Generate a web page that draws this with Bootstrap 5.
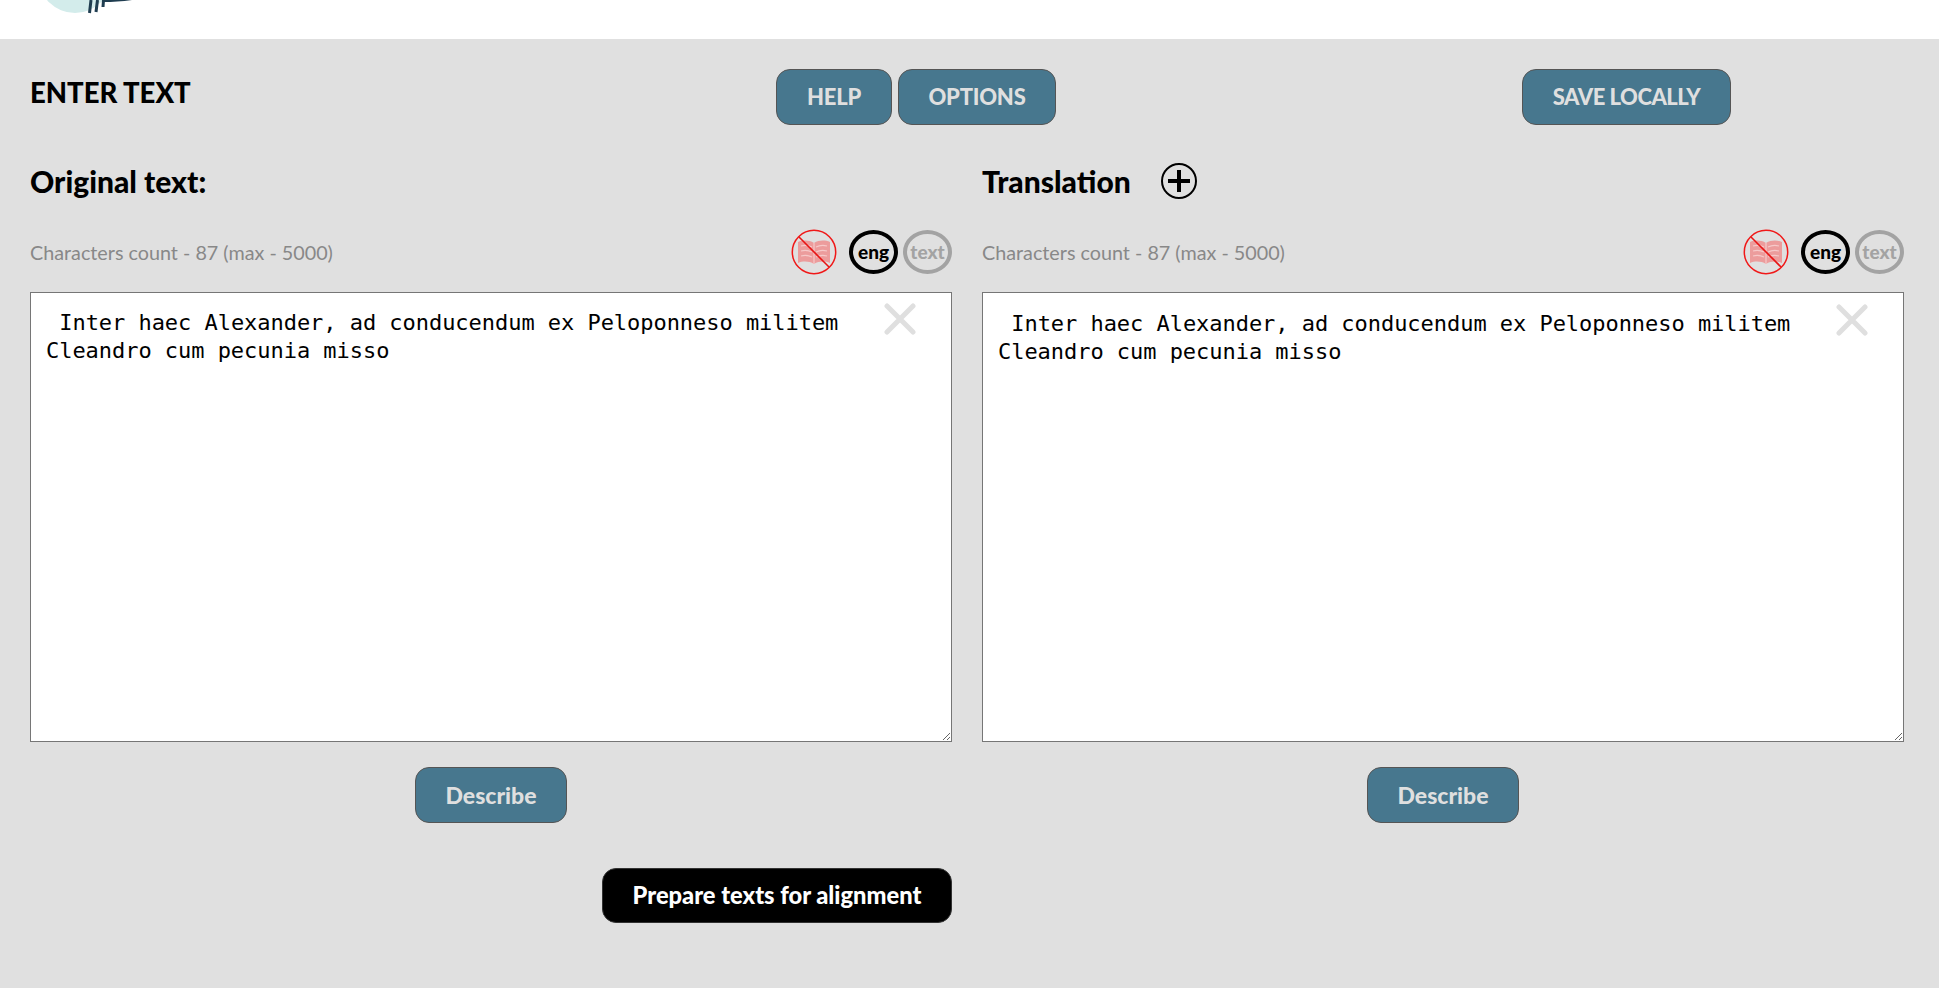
<!DOCTYPE html>
<html lang="en">
<head>
<meta charset="utf-8">
<title>Enter text</title>
<link href="https://cdn.jsdelivr.net/npm/bootstrap@5.3.0/dist/css/bootstrap.min.css" rel="stylesheet">
<style>
html,body{height:100%}
body{font-family:Lato,"Noto Sans","Liberation Sans",sans-serif;background:#e0e0e0;color:#000;overflow:hidden}
.top-strip{height:39px;background:#fff;overflow:hidden}
.top-strip svg{display:block}
.work-area{padding:30px 35px 0 30px}
.head-row{height:55px}
.page-title{flex:0 0 746px;font-size:27.500px;font-weight:900;line-height:46px;padding-top:1px;margin:0}
.act-btn{background:#47778e;color:#dfdfdf;border:1px solid #555;border-radius:14px;font-size:23px;font-weight:900;height:56px;padding:0 29px;line-height:1}
.act-btn:hover{background:#47778e;color:#dfdfdf;border-color:#555}
.caps-btn{font-size:22px;padding:0;letter-spacing:-.2px}
.help-btn{width:116px}
.options-btn{width:158px}
.save-btn{width:209px;margin-left:466px;letter-spacing:-.5px}
.gap-six{gap:6px}
.pane-row{--bs-gutter-x:30px}
.pane-title{font-size:30px;font-weight:900;margin:0;line-height:38px}
.title-line{height:38px;margin-top:38px}
.plus-ico{margin-left:30px}
.meta-line{height:56px;margin-top:24px}
.char-count{font-size:19.750px;color:#888;padding-top:2px}
.toggle-ring{width:49px;height:44px;border:4px solid #000;border-radius:50%;font-size:19px;font-weight:900;line-height:1;padding-bottom:2px}
.toggle-ring.is-off{border-color:#a3a3a3;color:#a3a3a3;margin-left:5px}
.book-ico{margin-right:12px}
.text-wrap{height:450px;margin-top:12px}
.text-box{width:100%;height:100%;display:block;border:1px solid #767676;border-radius:0;padding:16px 15px 0;font-family:"DejaVu Sans Mono",monospace;font-size:22px;letter-spacing:-.04px;line-height:27.500px;color:#000;background:#fff;outline:0}
.text-box.is-second{padding-top:17px}
.clear-ico{position:absolute;top:11px;right:36px}
.clear-ico.is-second{top:12px}
.row-btn{margin-top:25px}
.go-btn{background:#000;color:#fff;border:1px solid #333;border-radius:14px;font-size:23.700px;font-weight:900;height:55px;width:350px;padding:0;margin-top:45px}
.go-btn:hover{background:#000;color:#fff}
</style>
</head>
<body>
<div class="top-strip">
<svg width="200" height="39" viewBox="0 0 200 39" aria-hidden="true">
<circle cx="75" cy="-23.600" r="36.600" fill="#d3eceb"/>
<path d="M91 0 89.500 13M97.500 0 96 12M103.500 0 103 7" stroke="#1f3d50" stroke-width="3" fill="none"/>
<path d="M104 2C112 2 122 1.500 132 0H104Z" fill="#1f3d50"/>
</svg>
</div>
<main class="work-area">
<div class="d-flex head-row">
<h1 class="page-title">ENTER TEXT</h1>
<div class="d-flex gap-six">
<button type="button" class="btn act-btn caps-btn help-btn">HELP</button>
<button type="button" class="btn act-btn caps-btn options-btn">OPTIONS</button>
</div>
<button type="button" class="btn act-btn caps-btn save-btn">SAVE LOCALLY</button>
</div>
<div class="row pane-row">
<div class="col-6">
<div class="d-flex align-items-center title-line"><h2 class="pane-title">Original text:</h2></div>
<div class="d-flex align-items-center justify-content-between meta-line">
<span class="char-count">Characters count - 87 (max - 5000)</span>
<div class="d-flex align-items-center">
<svg class="book-ico" width="46" height="46" viewBox="0 0 46 46"><use href="#nobook"/></svg>
<div class="toggle-ring d-flex align-items-center justify-content-center">eng</div>
<div class="toggle-ring is-off d-flex align-items-center justify-content-center">text</div>
</div>
</div>
<div class="position-relative text-wrap">
<textarea class="text-box"> Inter haec Alexander, ad conducendum ex Peloponneso militem Cleandro cum pecunia misso</textarea>
<svg class="clear-ico" width="32" height="32" viewBox="0 0 32 32"><path d="M3 3 29 29M29 3 3 29" stroke="#dfdfdf" stroke-width="5" stroke-linecap="round"/></svg>
</div>
<div class="text-center row-btn"><button type="button" class="btn act-btn">Describe</button></div>
<div class="text-end"><button type="button" class="btn go-btn">Prepare texts for alignment</button></div>
</div>
<div class="col-6">
<div class="d-flex align-items-center title-line"><h2 class="pane-title">Translation</h2>
<svg class="plus-ico" width="36" height="36" viewBox="0 0 36 36"><circle cx="18" cy="18" r="17" fill="none" stroke="#000" stroke-width="2"/><path d="M18 7V29M7 18H29" stroke="#000" stroke-width="4"/></svg></div>
<div class="d-flex align-items-center justify-content-between meta-line">
<span class="char-count">Characters count - 87 (max - 5000)</span>
<div class="d-flex align-items-center">
<svg class="book-ico" width="46" height="46" viewBox="0 0 46 46"><use href="#nobook"/></svg>
<div class="toggle-ring d-flex align-items-center justify-content-center">eng</div>
<div class="toggle-ring is-off d-flex align-items-center justify-content-center">text</div>
</div>
</div>
<div class="position-relative text-wrap">
<textarea class="text-box is-second"> Inter haec Alexander, ad conducendum ex Peloponneso militem Cleandro cum pecunia misso</textarea>
<svg class="clear-ico is-second" width="32" height="32" viewBox="0 0 32 32"><path d="M3 3 29 29M29 3 3 29" stroke="#dfdfdf" stroke-width="5" stroke-linecap="round"/></svg>
</div>
<div class="text-center row-btn"><button type="button" class="btn act-btn">Describe</button></div>
</div>
</div>
</main>
<svg width="0" height="0" class="position-absolute"><defs>
<g id="nobook">
<path d="M7 13C12 11 18 11 23 14C28 11 34 11 39 13V34C34 32 28 32 23 35C18 32 12 32 7 34Z" fill="#ec9c9c"/>
<path d="M10 17C14 16 17 16 21 18M10 22C14 21 17 21 21 23M10 27C14 26 17 26 21 28M25 18C29 16 32 16 36 17M25 23C29 21 32 21 36 22M25 28C29 26 32 26 36 27M23 14V35" stroke="#f6c9c9" stroke-width="1.200" fill="none"/>
<circle cx="23" cy="23" r="21.700" fill="none" stroke="#f01818" stroke-width="1.500"/>
<path d="M8 8 38 38" stroke="#e81414" stroke-width="1.600"/>
</g>
</defs></svg>
</body>
</html>
